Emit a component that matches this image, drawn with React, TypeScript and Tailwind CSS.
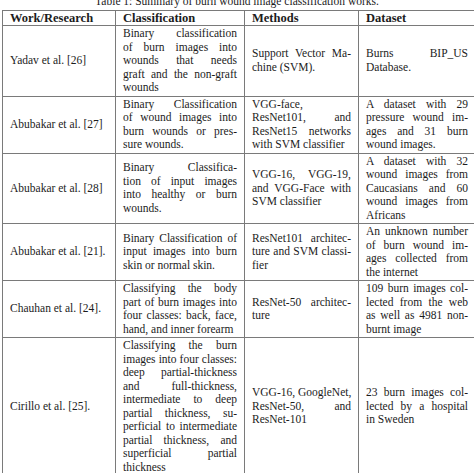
import React from 'react';

type Row = {
  work: string;
  cls: string[];
  methods: string[];
  data: string[];
};

const rows: Row[] = [
  {
    work: 'Yadav et al. [26]',
    cls: ['Binary classification', 'of burn images into', 'wounds that needs', 'graft and the non-graft', 'wounds'],
    methods: ['Support Vector Ma-', 'chine (SVM).'],
    data: ['Burns BIP_US', 'Database.'],
  },
  {
    work: 'Abubakar et al. [27]',
    cls: ['Binary Classification', 'of wound images into', 'burn wounds or pres-', 'sure wounds.'],
    methods: ['VGG-face,', 'ResNet101, and', 'ResNet15 networks', 'with SVM classifier'],
    data: ['A dataset with 29', 'pressure wound im-', 'ages and 31 burn', 'wound images.'],
  },
  {
    work: 'Abubakar et al. [28]',
    cls: ['Binary Classifica-', 'tion of input images', 'into healthy or burn', 'wounds.'],
    methods: ['VGG-16, VGG-19,', 'and VGG-Face with', 'SVM classifier'],
    data: ['A dataset with 32', 'wound images from', 'Caucasians and 60', 'wound images from', 'Africans'],
  },
  {
    work: 'Abubakar et al. [21].',
    cls: ['Binary Classification of', 'input images into burn', 'skin or normal skin.'],
    methods: ['ResNet101 architec-', 'ture and SVM classi-', 'fier'],
    data: ['An unknown number', 'of burn wound im-', 'ages collected from', 'the internet'],
  },
  {
    work: 'Chauhan et al. [24].',
    cls: ['Classifying the body', 'part of burn images into', 'four classes: back, face,', 'hand, and inner forearm'],
    methods: ['ResNet-50 architec-', 'ture'],
    data: ['109 burn images col-', 'lected from the web', 'as well as 4981 non-', 'burnt image'],
  },
  {
    work: 'Cirillo et al. [25].',
    cls: [
      'Classifying the burn',
      'images into four classes:',
      'deep partial-thickness',
      'and full-thickness,',
      'intermediate to deep',
      'partial thickness, su-',
      'perficial to intermediate',
      'partial thickness, and',
      'superficial partial',
      'thickness',
    ],
    methods: ['VGG-16, GoogleNet,', 'ResNet-50, and', 'ResNet-101'],
    data: ['23 burn images col-', 'lected by a hospital', 'in Sweden'],
  },
];

// every line but the last is stretched to the full column, like LaTeX does
function Lines({ lines }: { lines: string[] }) {
  return (
    <>
      {lines.map((line, i) => (
        <div key={i} className={i < lines.length - 1 ? 'whitespace-nowrap [text-align-last:justify]' : 'whitespace-nowrap'}>
          {line}
        </div>
      ))}
    </>
  );
}

const cell = 'border border-[#7a7a7a] px-[7px] py-[1px] align-middle';
const head = 'border border-[#7a7a7a] px-[7px] py-0 text-left text-[12.5px] font-bold leading-[13px]';

export default function App() {
  return (
    <div className="w-[474px] h-[473px] overflow-hidden bg-white text-[#1c1c1c] text-[11.5px] leading-[13.5px] font-['Liberation_Serif','Times_New_Roman',serif]">
      <div className="h-[10px] overflow-hidden">
        <p className="-mt-[5px] text-center">Table 1: Summary of burn wound image classification works.</p>
      </div>
      <table className="ml-[2px] w-[473px] table-fixed border-collapse">
        <colgroup>
          <col className="w-[113px]" />
          <col className="w-[129px]" />
          <col className="w-[114px]" />
          <col className="w-[117px]" />
        </colgroup>
        <thead>
          <tr className="h-[15px]">
            <th className={head}>Work/Research</th>
            <th className={head}>Classification</th>
            <th className={head}>Methods</th>
            <th className={head}>Dataset</th>
          </tr>
        </thead>
        <tbody>
          {rows.map((row) => (
            <tr key={row.work}>
              <td className={cell + ' whitespace-nowrap'}>{row.work}</td>
              <td className={cell}>
                <Lines lines={row.cls} />
              </td>
              <td className={cell}>
                <Lines lines={row.methods} />
              </td>
              <td className={cell}>
                <Lines lines={row.data} />
              </td>
            </tr>
          ))}
        </tbody>
      </table>
    </div>
  );
}
